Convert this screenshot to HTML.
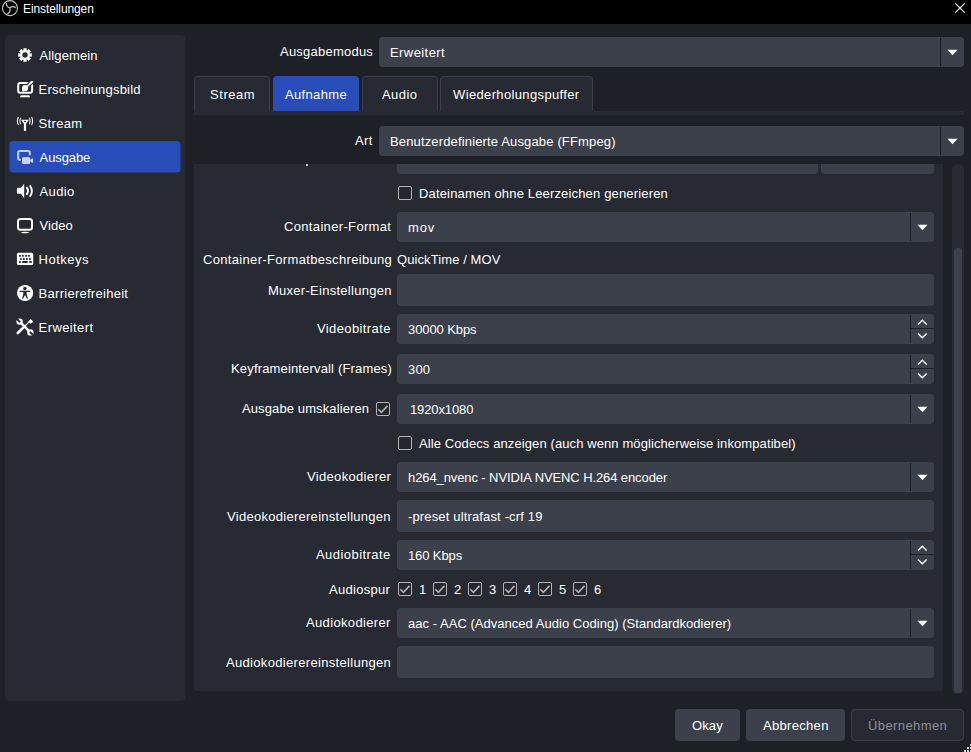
<!DOCTYPE html>
<html><head><meta charset="utf-8">
<style>
*{box-sizing:border-box;margin:0;padding:0}
html,body{width:971px;height:752px;overflow:hidden;background:#1e2028}
body{position:relative;font-family:"Liberation Sans",sans-serif;font-size:13px;color:#fff}
.a{position:absolute}
.t{position:absolute;line-height:15px;white-space:pre}
.cb{position:absolute;width:14px;height:14px;border:1.5px solid #b2b2b6;border-radius:2px;background:#25272f}
</style></head><body>
<div class="a" style="left:0px;top:0px;width:971px;height:24px;background:#000;"></div>
<svg class="a" style="left:0;top:0" width="24" height="24" viewBox="0 0 24 24"><circle cx="10" cy="8.1" r="7.5" fill="none" stroke="#c8c8c8" stroke-width="1.1"/><path d="M6.3,2.9 Q6,6.6 9.8,7.9 M9.8,7.9 Q12.6,5.4 15.8,7.8 M9.8,7.9 Q11.2,11.6 7.2,14.2" fill="none" stroke="#c0c0c0" stroke-width="1.2"/></svg><svg class="a" style="left:950px;top:0" width="21" height="20" viewBox="0 0 21 20"><path d="M5.3,3.3 L14.7,12.7 M14.7,3.3 L5.3,12.7" stroke="#fff" stroke-width="1.2"/></svg>
<div class="t" style="left:23px;top:2px;letter-spacing:-0.10px;font-size:12px;">Einstellungen</div>
<div class="a" style="left:5px;top:35px;width:180px;height:666px;background:#272a33;border-radius:4px"></div>
<svg class="a" style="left:0;top:130px" width="190" height="50"><rect x="9.5" y="11" width="171" height="31.6" rx="4" fill="#284cb8"/></svg>
<svg class="a" style="left:14px;top:44px" width="24" height="24" viewBox="0 0 24 24"><path d="M9.09,6.38 L9.45,6.24 L9.31,4.21 L12.69,4.21 L12.55,6.24 L12.91,6.38 L13.27,6.54 L14.61,5.00 L17.00,7.39 L15.46,8.73 L15.62,9.09 L15.76,9.45 L17.79,9.31 L17.79,12.69 L15.76,12.55 L15.62,12.91 L15.46,13.27 L17.00,14.61 L14.61,17.00 L13.27,15.46 L12.91,15.62 L12.55,15.76 L12.69,17.79 L9.31,17.79 L9.45,15.76 L9.09,15.62 L8.73,15.46 L7.39,17.00 L5.00,14.61 L6.54,13.27 L6.38,12.91 L6.24,12.55 L4.21,12.69 L4.21,9.31 L6.24,9.45 L6.38,9.09 L6.54,8.73 L5.00,7.39 L7.39,5.00 L8.73,6.54Z" fill="#fff"/><circle cx="11" cy="11" r="2.7" fill="#272a33"/></svg>
<svg class="a" style="left:14px;top:78px" width="24" height="24" viewBox="0 0 24 24"><rect x="4.2" y="5" width="13.9" height="9.8" rx="2" fill="none" stroke="#fff" stroke-width="2"/><path d="M16.2,1.8 L20.6,1.8 L20.6,4.6 L14.2,10 L11.8,7.8Z" fill="#272a33"/><path d="M17,3 L19.3,3 L19.3,4.1 L13.8,8.9 L12.9,8Z" fill="#fff"/><path d="M8,13.2 L8,10.4 A3.1,3.1 0 1 1 11,13.2 Z" fill="#fff"/><path d="M5.9,19.2 L6.8,17.3 L15.2,17.3 L16.1,19.2Z" fill="#fff"/></svg>
<svg class="a" style="left:14px;top:112px" width="24" height="24" viewBox="0 0 24 24"><path d="M7.1,7.7 L14.9,7.7 L12.1,11.8 L12.1,19 L9.9,19 L9.9,11.8Z" fill="#fff"/><ellipse cx="11" cy="9.4" rx="1.1" ry="0.6" fill="#272a33"/><path d="M4.4,4.9 Q2.4,9 4.4,13.1 M6.6,5.8 Q5.1,9 6.6,12.2 M17.6,4.9 Q19.6,9 17.6,13.1 M15.4,5.8 Q16.9,9 15.4,12.2" fill="none" stroke="#fff" stroke-width="1.05"/></svg>
<svg class="a" style="left:14px;top:146px" width="24" height="24" viewBox="0 0 24 24"><path d="M6.8,13.8 L5.7,13.8 Q4.2,13.8 4.2,12.3 L4.2,6.5 Q4.2,5 5.7,5 L14.3,5 Q15.8,5 15.8,6.5 L15.8,9.3" fill="none" stroke="#c9d1f0" stroke-width="2"/><rect x="8" y="11" width="8.2" height="7" rx="1.6" fill="#c9d1f0"/><path d="M16,13.8 L19.1,12 L19.1,17 L16,15.2Z" fill="#c9d1f0"/></svg>
<svg class="a" style="left:14px;top:180px" width="24" height="24" viewBox="0 0 24 24"><path d="M3.6,7.7 L7,7.7 L10.2,3.8 L10.2,18.2 L7,13.7 L3.6,13.7 Q2.9,13.7 2.9,13 L2.9,8.4 Q2.9,7.7 3.6,7.7Z" fill="#fff"/><path d="M12.4,7.2 Q15.6,11 12.4,14.8 M15.8,5.2 Q20,11 15.8,16.8" fill="none" stroke="#fff" stroke-width="1.9"/></svg>
<svg class="a" style="left:14px;top:214px" width="24" height="24" viewBox="0 0 24 24"><rect x="4" y="5" width="14" height="10.8" rx="2.5" fill="none" stroke="#fff" stroke-width="2"/><ellipse cx="11" cy="18.6" rx="4" ry="0.75" fill="#fff"/></svg>
<svg class="a" style="left:14px;top:248px" width="24" height="24" viewBox="0 0 24 24"><rect x="2.9" y="4.8" width="16.3" height="12.3" rx="1.5" fill="#fff"/><rect x="5.0" y="6.9" width="1.8" height="1.8" rx="0.4" fill="#272a33"/><rect x="8.0" y="6.9" width="1.8" height="1.8" rx="0.4" fill="#272a33"/><rect x="11.1" y="6.9" width="1.8" height="1.8" rx="0.4" fill="#272a33"/><rect x="14.1" y="6.9" width="1.8" height="1.8" rx="0.4" fill="#272a33"/><rect x="6.0" y="10.1" width="1.8" height="1.8" rx="0.4" fill="#272a33"/><rect x="9.0" y="10.1" width="1.8" height="1.8" rx="0.4" fill="#272a33"/><rect x="12.0" y="10.1" width="1.8" height="1.8" rx="0.4" fill="#272a33"/><rect x="15.1" y="10.1" width="1.8" height="1.8" rx="0.4" fill="#272a33"/><rect x="5" y="13.1" width="1.8" height="1.8" rx="0.4" fill="#272a33"/><rect x="8.1" y="13.1" width="5.6" height="1.8" rx="0.4" fill="#272a33"/><rect x="15.2" y="13.1" width="2.5" height="1.8" rx="0.4" fill="#272a33"/></svg>
<svg class="a" style="left:14px;top:282px" width="24" height="24" viewBox="0 0 24 24"><circle cx="11.1" cy="11" r="8.1" fill="#fff"/><circle cx="10.9" cy="6.6" r="1.75" fill="#272a33"/><path d="M6.1,9.4 L15.8,9.4" stroke="#272a33" stroke-width="1.1" stroke-linecap="round"/><path d="M9.3,9.2 L12.5,9.2 L12.7,12.6 L13.9,16.4 L12.9,16.8 L11,13 L9.1,16.8 L8.1,16.4 L9.2,12.6Z" fill="#272a33"/></svg>
<svg class="a" style="left:14px;top:316px" width="24" height="24" viewBox="0 0 24 24"><path d="M4.2,16.2 L12.8,7.6" stroke="#fff" stroke-width="0" /><path d="M3.8,17 L10,10.8" stroke="#fff" stroke-width="2.6" stroke-linecap="round"/><path d="M10.5,10.5 L15.8,5.2" stroke="#fff" stroke-width="1.1"/><path d="M15.3,5.7 L16.5,3.8 L18.4,5.7 L16.5,6.9Z" fill="#fff" stroke="#fff" stroke-width="1.3" stroke-linejoin="round"/><path d="M6.2,6.2 L15.8,15.8" stroke="#fff" stroke-width="2.4"/><circle cx="5.6" cy="5.6" r="3.2" fill="#fff"/><circle cx="16.4" cy="16.4" r="3.2" fill="#fff"/><path d="M3.5,3.5 L5.6,5.6" stroke="#272a33" stroke-width="2" stroke-linecap="round"/><path d="M18.5,18.5 L16.4,16.4" stroke="#272a33" stroke-width="2" stroke-linecap="round"/></svg>

<div class="t" style="left:39.6px;top:48px;letter-spacing:0.11px;">Allgemein</div>
<div class="t" style="left:38.6px;top:82px;letter-spacing:0.19px;">Erscheinungsbild</div>
<div class="t" style="left:38.6px;top:116px;letter-spacing:0.34px;">Stream</div>
<div class="t" style="left:39.6px;top:150px;letter-spacing:-0.10px;">Ausgabe</div>
<div class="t" style="left:39.6px;top:184px;letter-spacing:0.33px;">Audio</div>
<div class="t" style="left:39.6px;top:218px;letter-spacing:0.00px;">Video</div>
<div class="t" style="left:38.6px;top:252px;letter-spacing:0.48px;">Hotkeys</div>
<div class="t" style="left:38.6px;top:286px;letter-spacing:0.27px;">Barrierefreiheit</div>
<div class="t" style="left:38.6px;top:320px;letter-spacing:0.40px;">Erweitert</div>
<div class="t" style="left:280px;top:44px;letter-spacing:0.23px;">Ausgabemodus</div>
<div class="a" style="left:379px;top:37px;width:585px;height:30px;background:#3c404b;border-radius:4px"></div>
<div class="a" style="left:940px;top:38px;width:1px;height:28px;background:#1e2028;"></div>
<svg class="a" style="left:940px;top:37px" width="24" height="30" viewBox="0 0 24 30"><path d="M7.5,12.7 L17.5,12.7 L12.5,18.3Z" fill="#fff"/></svg>
<div class="t" style="left:390px;top:45px;letter-spacing:0.42px;">Erweitert</div>
<div class="a" style="left:194px;top:76px;width:76px;height:35px;background:#272a33;border:1px solid #3a3d48;border-bottom:none;border-radius:4px 4px 0 0"></div>
<div class="t" style="left:210px;top:87px;letter-spacing:0.56px;">Stream</div>
<div class="a" style="left:273px;top:76px;width:86px;height:35px;background:#284cb8;border-radius:4px 4px 0 0"></div>
<div class="t" style="left:285px;top:87px;letter-spacing:0.34px;">Aufnahme</div>
<div class="a" style="left:362px;top:76px;width:76px;height:35px;background:#272a33;border:1px solid #3a3d48;border-bottom:none;border-radius:4px 4px 0 0"></div>
<div class="t" style="left:382px;top:87px;letter-spacing:0.45px;">Audio</div>
<div class="a" style="left:440px;top:76px;width:153px;height:35px;background:#272a33;border:1px solid #3a3d48;border-bottom:none;border-radius:4px 4px 0 0"></div>
<div class="t" style="left:453px;top:87px;letter-spacing:0.36px;">Wiederholungspuffer</div>
<div class="a" style="left:194px;top:111px;width:770px;height:4px;background:#272a33;"></div>
<div class="t" style="left:355px;top:133px;letter-spacing:0.40px;">Art</div>
<div class="a" style="left:379px;top:126px;width:585px;height:30px;background:#3c404b;border-radius:4px"></div>
<div class="a" style="left:940px;top:127px;width:1px;height:28px;background:#1e2028;"></div>
<svg class="a" style="left:940px;top:126px" width="24" height="30" viewBox="0 0 24 30"><path d="M7.5,12.7 L17.5,12.7 L12.5,18.3Z" fill="#fff"/></svg>
<div class="t" style="left:390px;top:134px;letter-spacing:0.15px;">Benutzerdefinierte Ausgabe (FFmpeg)</div>
<div class="a" style="left:194px;top:164px;width:749px;height:527px;background:#272a33;border-radius:0 0 3px 3px"></div>
<div class="a" style="left:952px;top:164px;width:12px;height:530px;background:#282b34;border-radius:5px"></div>
<div class="a" style="left:954px;top:248px;width:8px;height:445px;background:#3c404b;border-radius:3px"></div>
<div class="a" style="left:306px;top:164px;width:2px;height:2px;background:#c8c8c8;"></div>
<div class="a" style="left:397px;top:164px;width:421px;height:10px;background:#3c404b;border-radius:0 0 4px 4px"></div>
<div class="a" style="left:821px;top:164px;width:113px;height:10px;background:#3c404b;border-radius:0 0 4px 4px"></div>
<div class="cb" style="left:398px;top:186px"></div>
<div class="t" style="left:419px;top:186px;letter-spacing:0.16px;">Dateinamen ohne Leerzeichen generieren</div>
<div class="t" style="left:284px;top:219px;letter-spacing:0.34px;">Container-Format</div>
<div class="a" style="left:397px;top:212px;width:537px;height:30px;background:#3c404b;border-radius:4px"></div>
<div class="a" style="left:910px;top:213px;width:1px;height:28px;background:#1e2028;"></div>
<svg class="a" style="left:910px;top:212px" width="24" height="30" viewBox="0 0 24 30"><path d="M7.5,12.7 L17.5,12.7 L12.5,18.3Z" fill="#fff"/></svg>
<div class="t" style="left:408px;top:220px;letter-spacing:0.80px;">mov</div>
<div class="t" style="left:203px;top:252px;letter-spacing:0.33px;">Container-Formatbeschreibung</div>
<div class="t" style="left:397px;top:252px;letter-spacing:0.09px;">QuickTime / MOV</div>
<div class="t" style="left:268px;top:283px;letter-spacing:0.27px;">Muxer-Einstellungen</div>
<div class="a" style="left:397px;top:274px;width:537px;height:32px;background:#3c404b;border-radius:4px"></div>
<div class="t" style="left:317px;top:321px;letter-spacing:0.39px;">Videobitrate</div>
<div class="a" style="left:397px;top:314px;width:537px;height:30px;background:#3c404b;border-radius:4px"></div>
<div class="a" style="left:910px;top:315px;width:1px;height:28px;background:#1e2028;"></div>
<div class="a" style="left:911px;top:328px;width:23px;height:1px;background:#1e2028;"></div>
<svg class="a" style="left:911px;top:314px" width="23" height="30" viewBox="0 0 23 30"><path d="M7,10.5 L11.3,6.2 L15.6,10.5 M7,19.5 L11.3,23.8 L15.6,19.5" fill="none" stroke="#fff" stroke-width="1.4"/></svg>
<div class="t" style="left:408px;top:322px;letter-spacing:-0.09px;">30000 Kbps</div>
<div class="t" style="left:231px;top:361px;letter-spacing:0.16px;">Keyframeintervall (Frames)</div>
<div class="a" style="left:397px;top:354px;width:537px;height:30px;background:#3c404b;border-radius:4px"></div>
<div class="a" style="left:910px;top:355px;width:1px;height:28px;background:#1e2028;"></div>
<div class="a" style="left:911px;top:368px;width:23px;height:1px;background:#1e2028;"></div>
<svg class="a" style="left:911px;top:354px" width="23" height="30" viewBox="0 0 23 30"><path d="M7,10.5 L11.3,6.2 L15.6,10.5 M7,19.5 L11.3,23.8 L15.6,19.5" fill="none" stroke="#fff" stroke-width="1.4"/></svg>
<div class="t" style="left:408px;top:362px;letter-spacing:0.15px;">300</div>
<div class="t" style="left:242px;top:401px;letter-spacing:0.11px;">Ausgabe umskalieren</div>
<div class="cb" style="left:376px;top:402px"></div>
<svg class="a" style="left:376px;top:402px" width="14" height="14" viewBox="0 0 14 14"><path d="M2.3,7.3 L5.4,10.4 L11.5,3.9" fill="none" stroke="#b2b2b6" stroke-width="1.6"/></svg>
<div class="a" style="left:397px;top:394px;width:537px;height:30px;background:#3c404b;border-radius:4px"></div>
<div class="a" style="left:910px;top:395px;width:1px;height:28px;background:#1e2028;"></div>
<svg class="a" style="left:910px;top:394px" width="24" height="30" viewBox="0 0 24 30"><path d="M7.5,12.7 L17.5,12.7 L12.5,18.3Z" fill="#fff"/></svg>
<div class="t" style="left:410px;top:402px;letter-spacing:-0.11px;">1920x1080</div>
<div class="cb" style="left:398px;top:436px"></div>
<div class="t" style="left:419px;top:436px;letter-spacing:0.10px;">Alle Codecs anzeigen (auch wenn möglicherweise inkompatibel)</div>
<div class="t" style="left:307px;top:469px;letter-spacing:0.33px;">Videokodierer</div>
<div class="a" style="left:397px;top:462px;width:537px;height:30px;background:#3c404b;border-radius:4px"></div>
<div class="a" style="left:910px;top:463px;width:1px;height:28px;background:#1e2028;"></div>
<svg class="a" style="left:910px;top:462px" width="24" height="30" viewBox="0 0 24 30"><path d="M7.5,12.7 L17.5,12.7 L12.5,18.3Z" fill="#fff"/></svg>
<div class="t" style="left:408px;top:470px;letter-spacing:-0.10px;">h264_nvenc - NVIDIA NVENC H.264 encoder</div>
<div class="t" style="left:227px;top:509px;letter-spacing:0.28px;">Videokodierereinstellungen</div>
<div class="a" style="left:397px;top:500px;width:537px;height:32px;background:#3c404b;border-radius:4px"></div>
<div class="t" style="left:408px;top:509px;letter-spacing:0.15px;">-preset ultrafast -crf 19</div>
<div class="t" style="left:316px;top:547px;letter-spacing:0.45px;">Audiobitrate</div>
<div class="a" style="left:397px;top:540px;width:537px;height:30px;background:#3c404b;border-radius:4px"></div>
<div class="a" style="left:910px;top:541px;width:1px;height:28px;background:#1e2028;"></div>
<div class="a" style="left:911px;top:554px;width:23px;height:1px;background:#1e2028;"></div>
<svg class="a" style="left:911px;top:540px" width="23" height="30" viewBox="0 0 23 30"><path d="M7,10.5 L11.3,6.2 L15.6,10.5 M7,19.5 L11.3,23.8 L15.6,19.5" fill="none" stroke="#fff" stroke-width="1.4"/></svg>
<div class="t" style="left:408px;top:548px;letter-spacing:-0.11px;">160 Kbps</div>
<div class="t" style="left:329px;top:582px;letter-spacing:0.30px;">Audiospur</div>
<div class="cb" style="left:398px;top:582px"></div>
<svg class="a" style="left:398px;top:582px" width="14" height="14" viewBox="0 0 14 14"><path d="M2.3,7.3 L5.4,10.4 L11.5,3.9" fill="none" stroke="#b2b2b6" stroke-width="1.6"/></svg>
<div class="t" style="left:419px;top:582px;letter-spacing:0.00px;">1</div>
<div class="cb" style="left:433px;top:582px"></div>
<svg class="a" style="left:433px;top:582px" width="14" height="14" viewBox="0 0 14 14"><path d="M2.3,7.3 L5.4,10.4 L11.5,3.9" fill="none" stroke="#b2b2b6" stroke-width="1.6"/></svg>
<div class="t" style="left:454px;top:582px;letter-spacing:0.00px;">2</div>
<div class="cb" style="left:468px;top:582px"></div>
<svg class="a" style="left:468px;top:582px" width="14" height="14" viewBox="0 0 14 14"><path d="M2.3,7.3 L5.4,10.4 L11.5,3.9" fill="none" stroke="#b2b2b6" stroke-width="1.6"/></svg>
<div class="t" style="left:489px;top:582px;letter-spacing:0.00px;">3</div>
<div class="cb" style="left:503px;top:582px"></div>
<svg class="a" style="left:503px;top:582px" width="14" height="14" viewBox="0 0 14 14"><path d="M2.3,7.3 L5.4,10.4 L11.5,3.9" fill="none" stroke="#b2b2b6" stroke-width="1.6"/></svg>
<div class="t" style="left:524px;top:582px;letter-spacing:0.00px;">4</div>
<div class="cb" style="left:538px;top:582px"></div>
<svg class="a" style="left:538px;top:582px" width="14" height="14" viewBox="0 0 14 14"><path d="M2.3,7.3 L5.4,10.4 L11.5,3.9" fill="none" stroke="#b2b2b6" stroke-width="1.6"/></svg>
<div class="t" style="left:559px;top:582px;letter-spacing:0.00px;">5</div>
<div class="cb" style="left:573px;top:582px"></div>
<svg class="a" style="left:573px;top:582px" width="14" height="14" viewBox="0 0 14 14"><path d="M2.3,7.3 L5.4,10.4 L11.5,3.9" fill="none" stroke="#b2b2b6" stroke-width="1.6"/></svg>
<div class="t" style="left:594px;top:582px;letter-spacing:0.00px;">6</div>
<div class="t" style="left:306px;top:615px;letter-spacing:0.35px;">Audiokodierer</div>
<div class="a" style="left:397px;top:608px;width:537px;height:30px;background:#3c404b;border-radius:4px"></div>
<div class="a" style="left:910px;top:609px;width:1px;height:28px;background:#1e2028;"></div>
<svg class="a" style="left:910px;top:608px" width="24" height="30" viewBox="0 0 24 30"><path d="M7.5,12.7 L17.5,12.7 L12.5,18.3Z" fill="#fff"/></svg>
<div class="t" style="left:408px;top:616px;letter-spacing:0.03px;">aac - AAC (Advanced Audio Coding) (Standardkodierer)</div>
<div class="t" style="left:226px;top:655px;letter-spacing:0.32px;">Audiokodierereinstellungen</div>
<div class="a" style="left:397px;top:646px;width:537px;height:32px;background:#3c404b;border-radius:4px"></div>
<div class="a" style="left:675px;top:709px;width:65px;height:32px;background:#3c404b;border-radius:4px"></div>
<div class="a" style="left:746px;top:709px;width:99px;height:32px;background:#3c404b;border-radius:4px"></div>
<div class="a" style="left:851px;top:709px;width:113px;height:32px;background:#272a33;border:1px solid #3c404b;border-radius:4px"></div>
<div class="t" style="left:692px;top:718px;letter-spacing:0.10px;">Okay</div>
<div class="t" style="left:763px;top:718px;letter-spacing:0.31px;">Abbrechen</div>
<div class="t" style="left:868px;top:718px;letter-spacing:0.40px;color:#8b8e95;">Übernehmen</div>
<div class="a" style="left:964px;top:750px;width:2px;height:2px;background:#d8d8d8;"></div>
<div class="a" style="left:967px;top:750px;width:2px;height:2px;background:#d8d8d8;"></div>
<div class="a" style="left:970px;top:750px;width:2px;height:2px;background:#d8d8d8;"></div>
<div class="a" style="left:967px;top:747px;width:2px;height:2px;background:#d8d8d8;"></div>
<div class="a" style="left:970px;top:747px;width:2px;height:2px;background:#d8d8d8;"></div>
<div class="a" style="left:970px;top:744px;width:2px;height:2px;background:#d8d8d8;"></div>
</body></html>
